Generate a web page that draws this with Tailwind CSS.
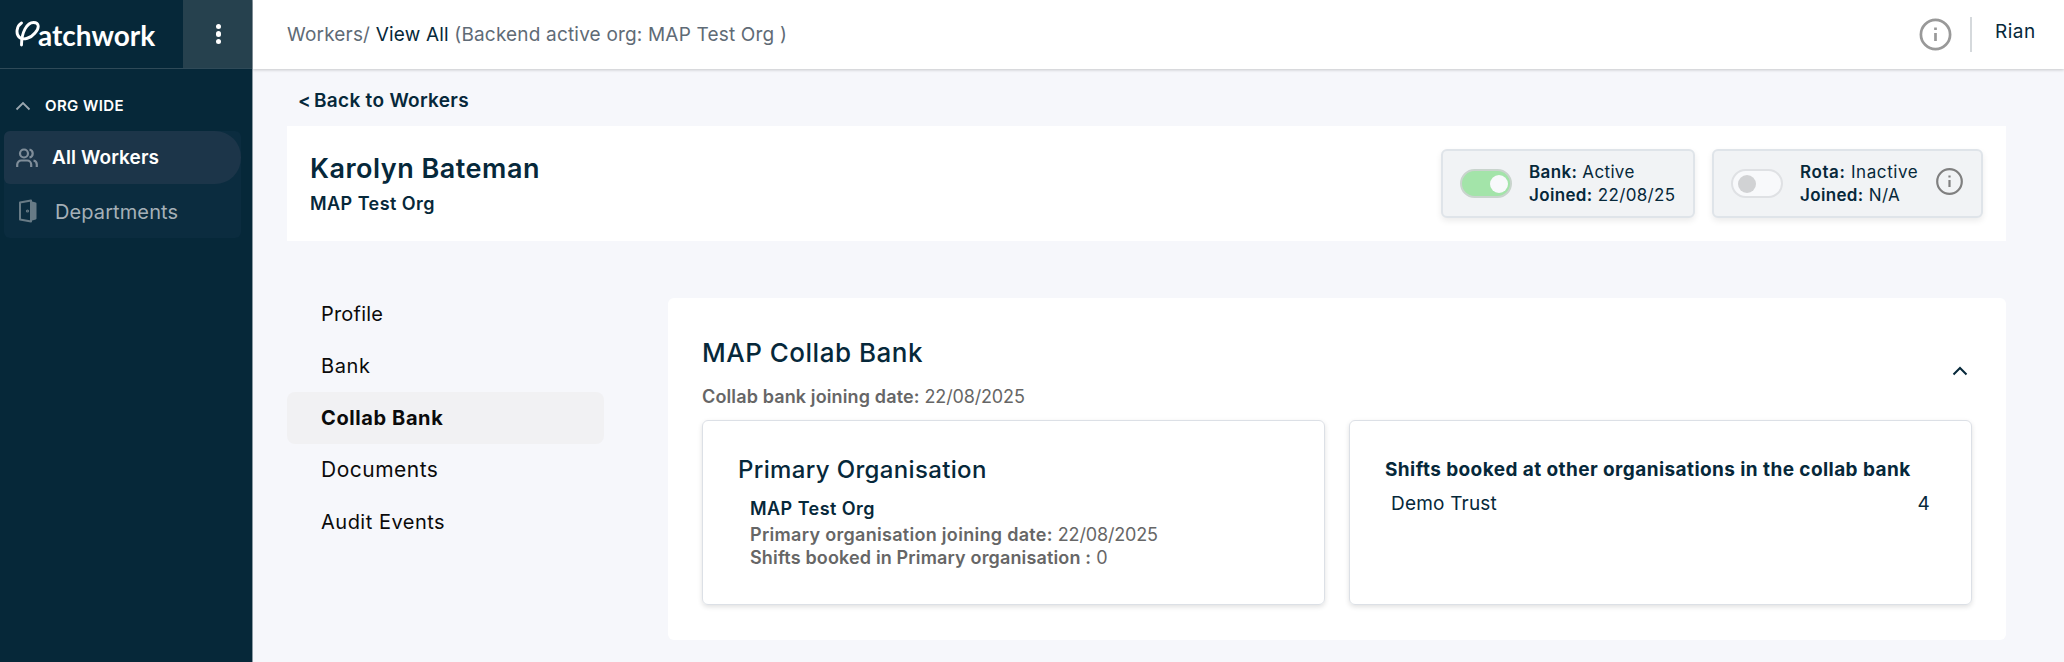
<!DOCTYPE html>
<html lang="en">
<head>
  <meta charset="UTF-8" />
  <meta name="viewport" content="width=device-width, initial-scale=1.0" />
  <title>Patchwork - Workers</title>
  <script src="https://cdn.jsdelivr.net/npm/@tailwindcss/browser@4"></script>
</head>
<body class="bg-[#f6f7fb] font-['Inter',sans-serif] text-[#06283a]">

<div class="flex h-[662px] overflow-hidden">

  <!-- Sidebar -->
  <aside class="w-[253px] shrink-0 bg-[#062839] border-r border-[#8b9aa3]">
    <div class="flex h-[69px] border-b border-[#2f4a58]">
      <div class="flex items-center w-[183px] pl-[15px] text-white">
        <svg class="w-[26px] h-[28px] shrink-0" viewBox="0 0 26 28" fill="none" stroke="currentColor" stroke-width="2.9" stroke-linecap="round"><path d="M6.500 3C1.500 6 0.500 14 4.500 17.500C8.500 20.500 16 18 20 13C24.500 8 24.500 2.500 18.500 2.500C12 2.500 6.500 12 6.500 25"/></svg>
        <span class="-ml-[3px] mt-px font-['Lato',sans-serif] font-bold text-[28px] leading-none">atchwork</span>
      </div>
      <button class="flex-1 flex flex-col items-center justify-center gap-[2px] pl-[2px] bg-[#26414e]">
        <span class="size-[5.500px] rounded-full bg-white"></span>
        <span class="size-[5.500px] rounded-full bg-white"></span>
        <span class="size-[5.500px] rounded-full bg-white"></span>
      </button>
    </div>
    <div class="flex items-center h-[62px] pt-[11px] pl-[15px]">
      <svg class="w-4 h-[10px]" viewBox="0 0 16 10" fill="none" stroke="#9aa7af" stroke-width="1.8"><path d="M1.500 8.500L8 2l6.500 6.500"/></svg>
      <span class="ml-[14px] pt-[2px] text-[15px] tracking-[0.4px] font-semibold text-white">ORG WIDE</span>
    </div>
    <nav class="ml-1 mr-[11px] rounded-md bg-[#0b2c3f]">
      <a href="#" class="flex items-center h-[53px] pl-3 rounded-l-md rounded-r-[26px] bg-[#1c3549] text-white font-semibold text-[19px] tracking-[0.1px]">
        <svg class="w-[22px] h-5" viewBox="0 0 22 20" fill="none" stroke="#7f8d99" stroke-width="2.200"><circle cx="8" cy="5.500" r="4"/><path d="M1.200 19v-2.500a4 4 0 0 1 4-4h6a4 4 0 0 1 4 4V19M13.500 1.500a4.100 4.100 0 0 1 0 8M17.500 12.500a4 4 0 0 1 3.300 4V19"/></svg>
        <span class="ml-[14px] pt-[2px]">All Workers</span>
      </a>
      <a href="#" class="flex items-center h-[54px] pl-[14px] text-[#a5b0b7] text-[20px] tracking-[0.1px]">
        <svg class="w-5 h-6" viewBox="0 0 20 24" fill="none" stroke="#687b86" stroke-width="2" stroke-linejoin="round"><path d="M2 3.500L13 1.500v21L2 20.500z"/><path d="M14 3.500l3.500 1v15l-3.500 1z" fill="#687b86"/><circle cx="9.500" cy="12" r="0.600"/></svg>
        <span class="ml-[17px] pt-[2px]">Departments</span>
      </a>
    </nav>
  </aside>

  <div class="flex-1 flex flex-col">

    <!-- Top bar -->
    <header class="flex h-[69px] shrink-0 bg-white shadow-[0_1px_3px_rgba(0,0,0,0.2)]">
      <div class="flex-1 pl-[34px] leading-[70px] text-[19px] tracking-[0.180px] text-[#5f6b76]">Workers/ <span class="text-[#06283a]">View All</span> (Backend active org: MAP Test Org )</div>
      <svg class="mt-[18px] size-[33px]" viewBox="0 0 33 33" fill="none" stroke="#999" stroke-width="2.700"><circle cx="16.500" cy="16.500" r="14.600"/><path d="M16.500 15v8M16.500 9.500v2.500"/></svg>
      <div class="mt-[17px] ml-[18px] w-[2px] h-[35px] bg-[#d5d9dc]"></div>
      <div class="w-[92px] pl-[23px] leading-[64px] text-[19px] tracking-[0.5px]">Rian</div>
    </header>

    <main class="pl-[34px] pr-[58px]">
      <a href="#" class="flex h-[57px] pl-[11px] leading-[64px] font-semibold text-[19px]"><span class="w-[16px]">&lt;</span><span class="tracking-[0.3px]">Back to Workers</span></a>

      <!-- Worker -->
      <section class="flex h-[115px] bg-white pl-[23px] pr-[23px]">
        <div class="flex-1">
          <h1 class="mt-[24px] leading-[38px] text-[27px] tracking-[0.5px] font-semibold">Karolyn Bateman</h1>
          <p class="mt-[2px] leading-[28px] text-[18px] tracking-[0.450px] font-semibold">MAP Test Org</p>
        </div>
        <div class="flex gap-[17px] mt-[23px] h-[69px] text-[17px] leading-[23px] tracking-[0.350px]">
          <div class="flex items-center w-[254px] pl-[17px] rounded-md border-2 border-[#dfe4e9] bg-[#f1f3f5] shadow-[0_3px_6px_rgba(0,0,0,0.08)]">
            <div class="flex items-center justify-end w-[52px] h-[29px] pr-[2px] rounded-full border-2 border-[#c9d4cd] bg-[#a3e4a9]"><span class="size-[18px] rounded-full bg-[#f8f9fb]"></span></div>
            <div class="ml-[17px] whitespace-nowrap">
              <p><b class="font-semibold">Bank:</b> Active</p>
              <p><b class="font-semibold">Joined:</b> 22/08/25</p>
            </div>
          </div>
          <div class="flex items-center w-[271px] pl-[17px] rounded-md border-2 border-[#dfe4e9] bg-[#f1f3f5] shadow-[0_3px_6px_rgba(0,0,0,0.08)]">
            <div class="flex items-center w-[52px] h-[29px] pl-[5px] rounded-full border-2 border-[#dfe1e4] bg-[#f8f9fb]"><span class="size-[18px] rounded-full bg-[#d1d2d4]"></span></div>
            <div class="ml-[17px] w-[136px] whitespace-nowrap">
              <p class="tracking-[0.6px]"><b class="font-semibold">Rota:</b> Inactive</p>
              <p><b class="font-semibold">Joined:</b> N/A</p>
            </div>
            <svg class="size-[27px] mb-[5px]" viewBox="0 0 27 27" fill="none" stroke="#808080" stroke-width="2.200"><circle cx="13.500" cy="13.500" r="12.300"/><path d="M13.500 12v7M13.500 7.500v2"/></svg>
          </div>
        </div>
      </section>

      <div class="flex">
        <!-- Tabs -->
        <nav class="mt-[47px] w-[317px] shrink-0 text-[20px] leading-[52px] text-[#0b0b0b]">
          <a href="#" class="block pl-[34px] tracking-[0.2px]">Profile</a>
          <a href="#" class="block pl-[34px] tracking-[0.6px]">Bank</a>
          <a href="#" class="block pl-[34px] rounded-lg bg-[#f1f1f3] font-bold tracking-[0.6px]">Collab Bank</a>
          <a href="#" class="block pl-[34px] text-[21px] tracking-[0.5px]">Documents</a>
          <a href="#" class="block pl-[34px] tracking-[0.5px]">Audit Events</a>
        </nav>

        <!-- Collab bank -->
        <section class="flex-1 mt-[57px] ml-[64px] h-[342px] px-[34px] rounded-md bg-white">
          <div class="flex justify-between h-[122px]">
            <div>
              <h2 class="mt-[36px] leading-[38px] text-[26px] tracking-[0.5px] font-medium">MAP Collab Bank</h2>
              <p class="mt-[13px] leading-[24px] text-[18px] tracking-[-0.150px] text-[#666]"><b class="font-semibold tracking-[0.130px]">Collab bank joining date:</b> 22/08/2025</p>
            </div>
            <svg class="mt-[68px] mr-[4px] w-4 h-[10px]" viewBox="0 0 16 10" fill="none" stroke="#06283a" stroke-width="2"><path d="M1.500 8.500L8 2l6.500 6.500"/></svg>
          </div>
          <div class="grid grid-cols-2 gap-6">
            <div class="h-[185px] pl-[35px] rounded-md border border-[#dce0e6] shadow-[0_2px_5px_rgba(0,0,0,0.12)]">
              <h3 class="mt-[31px] leading-[36px] text-[24px] tracking-[0.350px] font-medium">Primary Organisation</h3>
              <div class="ml-[12px] text-[18px] leading-[23px] tracking-[-0.150px] text-[#666]">
                <p class="mt-[8px] mb-px leading-[26px] tracking-[0.450px] font-semibold text-[#06283a]">MAP Test Org</p>
                <p><b class="font-semibold tracking-[0.3px]">Primary organisation joining date:</b> 22/08/2025</p>
                <p><b class="font-semibold tracking-[0.150px]">Shifts booked in Primary organisation :</b> 0</p>
              </div>
            </div>
            <div class="h-[185px] pl-[35px] pr-[41px] rounded-md border border-[#dce0e6] shadow-[0_2px_5px_rgba(0,0,0,0.12)]">
              <h3 class="mt-[35px] leading-[28px] text-[19px] tracking-[0.420px] font-bold whitespace-nowrap">Shifts booked at other organisations in the collab bank</h3>
              <div class="flex justify-between mt-[5px] pl-[6px] leading-[30px] text-[19px] tracking-[0.2px]">
                <span>Demo Trust</span>
                <span>4</span>
              </div>
            </div>
          </div>
        </section>
      </div>
    </main>
  </div>
</div>

</body>
</html>
